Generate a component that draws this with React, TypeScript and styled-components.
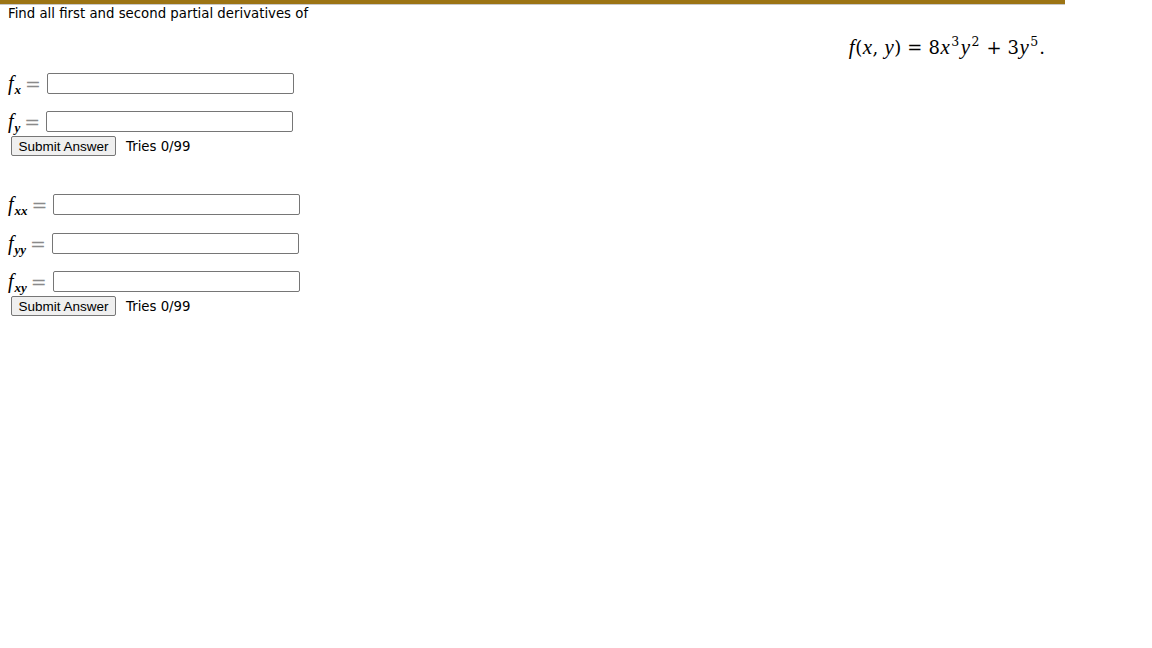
import React from 'react'
import styled, { createGlobalStyle } from 'styled-components'

const GlobalStyle = createGlobalStyle`
  html, body {
    margin: 0;
    padding: 0;
    background: #fff;
  }
  body {
    font-family: Verdana, "DejaVu Sans", sans-serif;
    font-size: 13.3px;
    color: #000;
  }
`

const TopBar = styled.div`
  width: 1065px;
  height: 4px;
  background: #9c7414;
  border-bottom: 1px solid #c8c8c8;
`

const Page = styled.div`
  padding: 0 8px;
`

const Prompt = styled.p`
  margin: 1px 0 0 0;
  font-size: 13.3px;
  line-height: 16px;
`

const FormulaRow = styled.div`
  width: 1037px;
  display: flex;
  justify-content: flex-end;
  margin-top: 12px;
  height: 26px;
  align-items: center;
`

const MathText = styled.span`
  font-family: "DejaVu Serif", "Liberation Serif", serif;
  font-size: 18px;
  white-space: nowrap;
`

// math variables: a real italic face
const V = styled.i`
  font-family: "Liberation Serif", serif;
  font-style: italic;
  font-size: 21px;
  margin: 0 0.5px;
`

const Sup = styled.sup`
  font-size: 12.5px;
  vertical-align: 8px;
  line-height: 0;
  margin-left: 1px;
  margin-right: 1px;
`

const Op = styled.span`
  margin: 0 6px;
`

const Part = styled.div<{ $gap: number }>`
  margin-top: ${(p) => p.$gap}px;
`

const FieldRow = styled.div<{ $top: number }>`
  display: flex;
  align-items: center;
  height: 21px;
  margin-top: ${(p) => p.$top}px;
`

const Label = styled.span`
  font-family: "Liberation Serif", serif;
  font-style: italic;
  font-size: 20px;
  white-space: nowrap;
`

const Sub = styled.sub`
  font-size: 13px;
  vertical-align: -4px;
  line-height: 0;
  font-weight: bold;
  margin-left: 1px;
`

const Eq = styled.span`
  font-family: "DejaVu Serif", "Liberation Serif", serif;
  font-style: normal;
  color: #8a8a8a;
  font-size: 19px;
  margin: 0 6px 0 4px;
`

const Input = styled.input`
  box-sizing: border-box;
  width: 247px;
  height: 21px;
  border: 1px solid #767676;
  border-radius: 2px;
  padding: 1px 2px;
  margin: 0;
  background: #fff;
`

const SubmitRow = styled.div`
  display: flex;
  align-items: center;
  margin-top: 4px;
  padding-left: 3px;
`

const SubmitButton = styled.button`
  box-sizing: border-box;
  height: 20px;
  width: 105px;
  padding: 0 4px;
  font-family: Arial, "Liberation Sans", sans-serif;
  font-size: 13.5px;
  color: #000;
  background: #efefef;
  border: 1px solid #767676;
  border-radius: 2px;
  white-space: nowrap;
`

const Tries = styled.span`
  margin-left: 10px;
  font-size: 13.3px;
`

type Field = { sub: string; top: number }

const DerivField = ({ sub, top }: Field) => (
  <FieldRow $top={top}>
    <Label>
      f<Sub>{sub}</Sub>
    </Label>
    <Eq>=</Eq>
    <Input type="text" />
  </FieldRow>
)

const Submit = () => (
  <SubmitRow>
    <SubmitButton>Submit Answer</SubmitButton>
    <Tries>Tries 0/99</Tries>
  </SubmitRow>
)

export default function App() {
  return (
    <>
      <GlobalStyle />
      <TopBar />
      <Page>
        <Prompt>Find all first and second partial derivatives of</Prompt>
        <FormulaRow>
          <MathText>
            <V>f</V>(<V>x</V>, <V>y</V>)<Op>=</Op>8<V>x</V>
            <Sup>3</Sup>
            <V>y</V>
            <Sup>2</Sup>
            <Op>+</Op>3<V>y</V>
            <Sup>5</Sup>.
          </MathText>
        </FormulaRow>
        <Part $gap={0}>
          <DerivField sub="x" top={13} />
          <DerivField sub="y" top={17} />
          <Submit />
        </Part>
        <Part $gap={38}>
          <DerivField sub="xx" top={0} />
          <DerivField sub="yy" top={18} />
          <DerivField sub="xy" top={17} />
          <Submit />
        </Part>
      </Page>
    </>
  )
}
